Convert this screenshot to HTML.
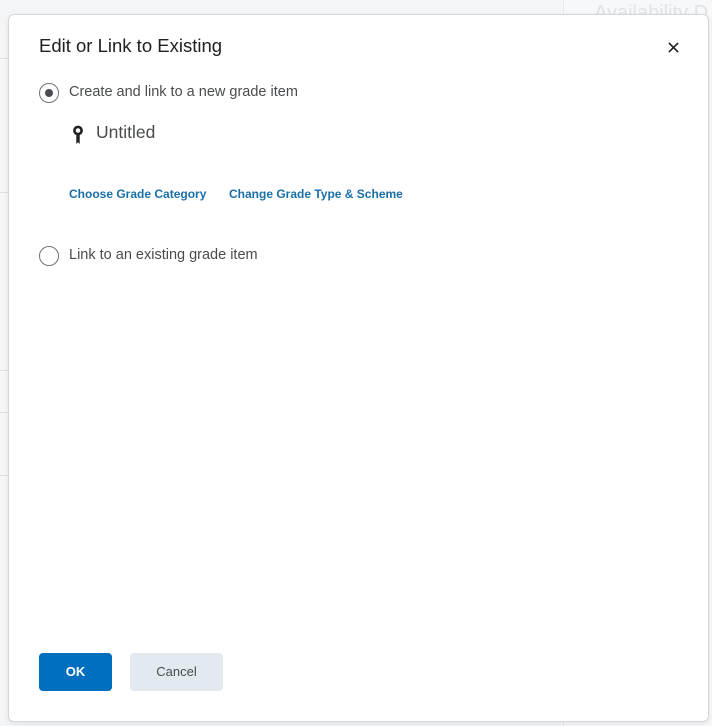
<!DOCTYPE html>
<html><head><meta charset="utf-8"><style>
html,body{margin:0;padding:0;width:712px;height:726px;overflow:hidden;background:#f4f5f7;font-family:"Liberation Sans",sans-serif;}
.bgr{position:absolute;left:563px;top:0;width:149px;height:726px;background:#f7f8f9;border-left:1px solid #e6e8eb;}
.bgt{position:absolute;left:594px;top:2px;font-size:20px;color:#e0e2e5;}
.line{position:absolute;left:0;width:8px;height:1px;background:#dcdfe3;}
.dlg{position:absolute;left:8px;top:14px;width:699px;height:706px;background:#fff;border:1px solid #d3d6da;border-radius:6px;box-shadow:0 2px 6px rgba(0,0,0,.08);}
.t{position:absolute;left:30px;top:20px;font-size:18.5px;color:#202122;}
.x{position:absolute;left:659px;top:27px;}
.radio{position:absolute;width:20px;height:20px;border:1px solid #6e7376;border-radius:50%;box-sizing:border-box;}
.dot{position:absolute;left:5px;top:5px;width:8px;height:8px;border-radius:50%;background:#494c4e;}
.lbl{position:absolute;font-size:14.5px;color:#494c4e;}
.link{position:absolute;top:172px;font-size:12px;font-weight:bold;color:#1a6fa8;}
.ok{position:absolute;left:30px;top:638px;width:73px;height:38px;background:#006fbf;border-radius:4px;color:#fff;font-weight:bold;font-size:13px;text-align:center;line-height:38px;}
.cancel{position:absolute;left:121px;top:638px;width:93px;height:38px;background:#e3e9f1;border-radius:4px;color:#494c4e;font-size:13px;text-align:center;line-height:38px;}
</style></head><body>
<div class="bgr"></div>
<div class="bgt">Availability D</div>
<div class="line" style="top:58px"></div>
<div class="line" style="top:192px"></div>
<div class="line" style="top:370px"></div>
<div class="line" style="top:412px"></div>
<div class="line" style="top:475px"></div>
<div class="dlg">
<div class="t">Edit or Link to Existing</div>
<svg class="x" width="11" height="11" viewBox="0 0 12 12"><path d="M1 1L11 11M11 1L1 11" stroke="#202122" stroke-width="1.8"/></svg>
<div class="radio" style="left:30px;top:68px"><div class="dot"></div></div>
<div class="lbl" style="left:60px;top:69px">Create and link to a new grade item</div>
<svg style="position:absolute;left:63px;top:110px" width="12" height="20" viewBox="0 0 12 20"><circle cx="6" cy="5.5" r="3.6" fill="none" stroke="#202122" stroke-width="2.6"/><path d="M4.3 9V19L6 17.3L7.7 19V9Z" fill="#202122"/></svg>
<div class="lbl" style="left:87px;top:107px;font-size:17.5px">Untitled</div>
<div class="link" style="left:60px">Choose Grade Category</div>
<div class="link" style="left:220px">Change Grade Type &amp; Scheme</div>
<div class="radio" style="left:30px;top:231px"></div>
<div class="lbl" style="left:60px;top:232px">Link to an existing grade item</div>
<div class="ok">OK</div>
<div class="cancel">Cancel</div>
</div>
</body></html>
